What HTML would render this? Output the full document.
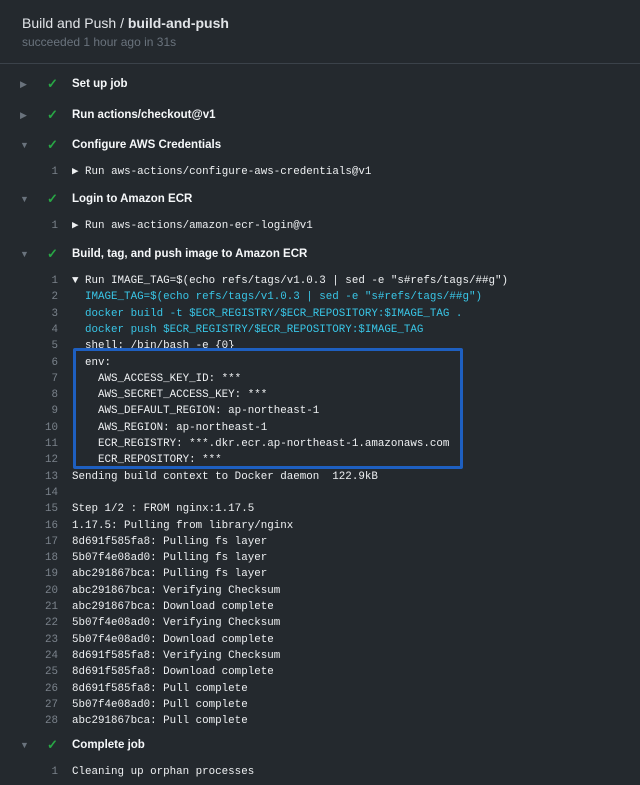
<!DOCTYPE html>
<html><head><meta charset="utf-8"><style>
body{margin:0;background:#24292e;width:640px;height:785px;overflow:hidden;position:relative;font-family:"Liberation Sans",sans-serif;}
.t{position:absolute;left:22px;top:15px;font-size:14px;color:#e1e4e8;}
.s{position:absolute;left:22px;top:35px;font-size:12px;color:#6a737d;}
.hr{position:absolute;left:0;top:63px;width:640px;height:1px;background:#3b424a;}
.step{position:absolute;left:0;height:18px;line-height:18px;width:640px;}
.step .tri{position:absolute;left:20px;font-size:9px;color:#6a737d;}
.step .ck{position:absolute;left:47px;color:#28a745;font-size:13px;font-weight:bold;}
.step .nm{position:absolute;left:72px;color:#f6f8fa;font-size:11.5px;font-weight:bold;}
.ln{position:absolute;left:0;height:16px;line-height:16px;font-family:"Liberation Mono",monospace;font-size:10.85px;color:#eef0f2;white-space:pre;}
.ln .n{position:absolute;left:20px;width:38px;text-align:right;color:#7a828b;}
.ln .c{position:absolute;left:72px;}
.cy{color:#39c5e6;}
.box{position:absolute;left:73px;top:348px;width:384px;height:115px;border:3px solid #1e5fc0;border-radius:2px;}
</style></head><body>
<div class="t">Build and Push / <b>build-and-push</b></div>
<div class="s">succeeded 1 hour ago in 31s</div>
<div class="hr"></div>

<div class="step" style="top:75px"><span class="tri">▶</span><span class="ck">✓</span><span class="nm">Set up job</span></div>
<div class="step" style="top:106px"><span class="tri">▶</span><span class="ck">✓</span><span class="nm">Run actions/checkout@v1</span></div>
<div class="step" style="top:136px"><span class="tri">▼</span><span class="ck">✓</span><span class="nm">Configure AWS Credentials</span></div>
<div class="ln" style="top:164px"><span class="n">1</span><span class="c">▶ Run aws-actions/configure-aws-credentials@v1</span></div>
<div class="step" style="top:190px"><span class="tri">▼</span><span class="ck">✓</span><span class="nm">Login to Amazon ECR</span></div>
<div class="ln" style="top:218px"><span class="n">1</span><span class="c">▶ Run aws-actions/amazon-ecr-login@v1</span></div>
<div class="step" style="top:245px"><span class="tri">▼</span><span class="ck">✓</span><span class="nm">Build, tag, and push image to Amazon ECR</span></div>

<div class="ln" style="top:273px"><span class="n">1</span><span class="c">▼ Run IMAGE_TAG=$(echo refs/tags/v1.0.3 | sed -e "s#refs/tags/##g")</span></div>
<div class="ln" style="top:289.3px"><span class="n">2</span><span class="c cy">  IMAGE_TAG=$(echo refs/tags/v1.0.3 | sed -e "s#refs/tags/##g")</span></div>
<div class="ln" style="top:305.6px"><span class="n">3</span><span class="c cy">  docker build -t $ECR_REGISTRY/$ECR_REPOSITORY:$IMAGE_TAG .</span></div>
<div class="ln" style="top:321.9px"><span class="n">4</span><span class="c cy">  docker push $ECR_REGISTRY/$ECR_REPOSITORY:$IMAGE_TAG</span></div>
<div class="ln" style="top:338.2px"><span class="n">5</span><span class="c">  shell: /bin/bash -e {0}</span></div>
<div class="ln" style="top:354.5px"><span class="n">6</span><span class="c">  env:</span></div>
<div class="ln" style="top:370.8px"><span class="n">7</span><span class="c">    AWS_ACCESS_KEY_ID: ***</span></div>
<div class="ln" style="top:387.1px"><span class="n">8</span><span class="c">    AWS_SECRET_ACCESS_KEY: ***</span></div>
<div class="ln" style="top:403.4px"><span class="n">9</span><span class="c">    AWS_DEFAULT_REGION: ap-northeast-1</span></div>
<div class="ln" style="top:419.7px"><span class="n">10</span><span class="c">    AWS_REGION: ap-northeast-1</span></div>
<div class="ln" style="top:436px"><span class="n">11</span><span class="c">    ECR_REGISTRY: ***.dkr.ecr.ap-northeast-1.amazonaws.com</span></div>
<div class="ln" style="top:452.3px"><span class="n">12</span><span class="c">    ECR_REPOSITORY: ***</span></div>
<div class="box"></div>
<div class="ln" style="top:468.6px"><span class="n">13</span><span class="c">Sending build context to Docker daemon  122.9kB</span></div>
<div class="ln" style="top:484.9px"><span class="n">14</span><span class="c"></span></div>
<div class="ln" style="top:501.2px"><span class="n">15</span><span class="c">Step 1/2 : FROM nginx:1.17.5</span></div>
<div class="ln" style="top:517.5px"><span class="n">16</span><span class="c">1.17.5: Pulling from library/nginx</span></div>
<div class="ln" style="top:533.8px"><span class="n">17</span><span class="c">8d691f585fa8: Pulling fs layer</span></div>
<div class="ln" style="top:550.1px"><span class="n">18</span><span class="c">5b07f4e08ad0: Pulling fs layer</span></div>
<div class="ln" style="top:566.4px"><span class="n">19</span><span class="c">abc291867bca: Pulling fs layer</span></div>
<div class="ln" style="top:582.7px"><span class="n">20</span><span class="c">abc291867bca: Verifying Checksum</span></div>
<div class="ln" style="top:599px"><span class="n">21</span><span class="c">abc291867bca: Download complete</span></div>
<div class="ln" style="top:615.3px"><span class="n">22</span><span class="c">5b07f4e08ad0: Verifying Checksum</span></div>
<div class="ln" style="top:631.6px"><span class="n">23</span><span class="c">5b07f4e08ad0: Download complete</span></div>
<div class="ln" style="top:647.9px"><span class="n">24</span><span class="c">8d691f585fa8: Verifying Checksum</span></div>
<div class="ln" style="top:664.2px"><span class="n">25</span><span class="c">8d691f585fa8: Download complete</span></div>
<div class="ln" style="top:680.5px"><span class="n">26</span><span class="c">8d691f585fa8: Pull complete</span></div>
<div class="ln" style="top:696.8px"><span class="n">27</span><span class="c">5b07f4e08ad0: Pull complete</span></div>
<div class="ln" style="top:713.1px"><span class="n">28</span><span class="c">abc291867bca: Pull complete</span></div>
<div class="step" style="top:736px"><span class="tri">▼</span><span class="ck">✓</span><span class="nm">Complete job</span></div>
<div class="ln" style="top:764px"><span class="n">1</span><span class="c">Cleaning up orphan processes</span></div>
</body></html>
